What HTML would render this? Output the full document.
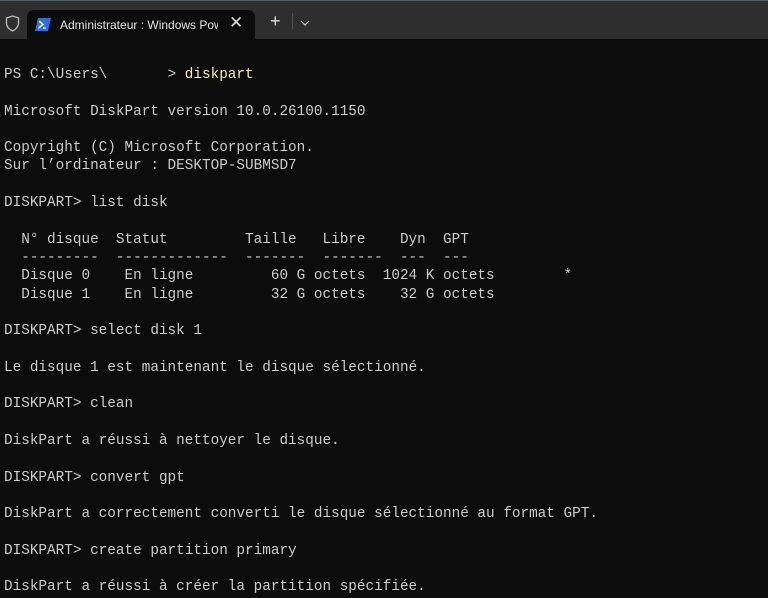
<!DOCTYPE html>
<html><head><meta charset="utf-8"><style>
html,body{margin:0;padding:0;width:768px;height:598px;overflow:hidden;background:#0c0c0c;}
#bar{position:absolute;left:0;top:0;width:768px;height:39px;background:#2e2e2e;border-top:1px solid #5a6068;box-sizing:border-box;}
#tab{position:absolute;left:27px;top:9px;width:228px;height:30px;background:#0c0c0c;border-radius:7px 7px 0 0;}
#tab .t{position:absolute;left:33px;top:8px;font:12px "Liberation Sans",sans-serif;color:#e6e6e6;white-space:nowrap;width:158px;overflow:hidden;}
#tab .x{position:absolute;left:202px;top:3px;font:17px "Liberation Sans",sans-serif;color:#ddd;}
pre{position:absolute;left:4px;top:66px;margin:0;font:14.35px/18.3px "Liberation Mono",monospace;color:#cccccc;}
.y{color:#f9f1a5}
</style></head><body>
<div id="bar">
<svg style="position:absolute;left:5px;top:14px" width="15" height="17" viewBox="0 0 15 17"><path d="M7.5 1 L13.5 3 V8 C13.5 12 10.5 14.5 7.5 16 C4.5 14.5 1.5 12 1.5 8 V3 Z" fill="none" stroke="#bbb" stroke-width="1.3"/></svg>
<div id="tab">
<svg style="position:absolute;left:8px;top:8px" width="16" height="13" viewBox="0 0 16 13"><path d="M3 0 H16 L13 13 H0 Z" fill="#2f6fd6"/><path d="M4 3 L8 6.5 L3.5 10" fill="none" stroke="#fff" stroke-width="1.5"/><path d="M8 10 H11" stroke="#fff" stroke-width="1.3"/></svg>
<div class="t">Administrateur : Windows PowerShell</div>
<div class="x">✕</div>
</div>
<div style="position:absolute;left:270px;top:10px;font:18px 'Liberation Sans',sans-serif;color:#ddd">+</div>
<div style="position:absolute;left:292px;top:12px;width:1px;height:16px;background:#555"></div>
<svg style="position:absolute;left:300px;top:19px" width="10" height="6" viewBox="0 0 10 6"><path d="M1 1 L5 5 L9 1" fill="none" stroke="#ccc" stroke-width="1.2"/></svg>
</div>
<pre>PS C:\Users\       &gt; <span class="y">diskpart</span>

Microsoft DiskPart version 10.0.26100.1150

Copyright (C) Microsoft Corporation.
Sur l’ordinateur : DESKTOP-SUBMSD7

DISKPART&gt; list disk

  N° disque  Statut         Taille   Libre    Dyn  GPT
  ---------  -------------  -------  -------  ---  ---
  Disque 0    En ligne         60 G octets  1024 K octets        *
  Disque 1    En ligne         32 G octets    32 G octets

DISKPART&gt; select disk 1

Le disque 1 est maintenant le disque sélectionné.

DISKPART&gt; clean

DiskPart a réussi à nettoyer le disque.

DISKPART&gt; convert gpt

DiskPart a correctement converti le disque sélectionné au format GPT.

DISKPART&gt; create partition primary

DiskPart a réussi à créer la partition spécifiée.
</pre>
</body></html>
